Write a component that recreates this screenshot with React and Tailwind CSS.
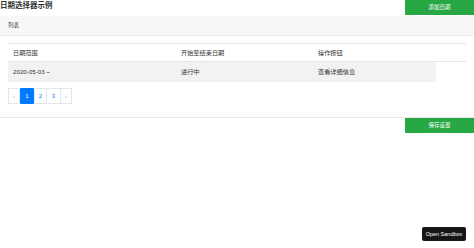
export default function App() {
  const font = { fontFamily: '"Liberation Sans", "Noto Sans CJK SC", sans-serif' };
  return (
    <div className="relative h-[248px] w-[474px] overflow-hidden bg-white text-[#212529]" style={font}>
      <div className="flex items-start justify-between">
        <h1 className="m-0 text-[7.5px] leading-[12px] font-bold text-[#333]">日期选择器示例</h1>
        <button className="h-[15px] w-[69px] bg-[#28a745] text-[5.5px] leading-[15px] text-white">添加日期</button>
      </div>
      <div className="mt-[1px] flex h-[20px] items-center border-b border-[#ececec] bg-[#f7f7f7] px-[8px] text-[5.5px] text-[#333]">
        列表
      </div>
      <div className="px-[8px] pt-[7px]">
        <div className="grid grid-cols-[168px_137px_123px_30px] text-[6.2px] text-[#333]">
          <div className="flex h-[19px] items-center border-t border-b border-[#e6e6e6] pl-[5px]">日期范围</div>
          <div className="flex h-[19px] items-center border-t border-b border-[#e6e6e6] pl-[5px]">开始至结束日期</div>
          <div className="flex h-[19px] items-center border-t border-b border-[#e6e6e6] pl-[5px]">操作按钮</div>
          <div className="h-[19px] border-t border-b border-[#e6e6e6]"></div>
          <div className="flex h-[20px] items-center bg-[#f2f2f2] pl-[5px]">2020-05-03 ~</div>
          <div className="flex h-[20px] items-center bg-[#f2f2f2] pl-[5px]">进行中</div>
          <div className="flex h-[20px] items-center bg-[#f2f2f2] pl-[5px]">查看详细信息</div>
          <div className="h-[20px]"></div>
        </div>
        <div className="mt-[6px] flex h-[16px] text-[6px] text-[#007bff]">
          <span className="flex w-[12px] items-center justify-center border border-[#e3e6ea] text-[#aab]">‹</span>
          <span className="flex w-[14px] items-center justify-center rounded-[1px] bg-[#007bff] text-white">1</span>
          <span className="flex w-[13px] items-center justify-center border border-[#e3e6ea]">2</span>
          <span className="flex w-[13px] items-center justify-center border-y border-[#e3e6ea]">3</span>
          <span className="flex w-[12px] items-center justify-center border border-[#e3e6ea] text-[#aab]">›</span>
        </div>
      </div>
      <div className="mt-[13px] flex justify-end border-t border-[#e9e9e9]">
        <button className="h-[15px] w-[69px] bg-[#28a745] text-[5.5px] leading-[15px] text-white">保存设置</button>
      </div>
      <div className="absolute right-[8px] bottom-[7px] flex h-[14px] w-[44px] items-center justify-center rounded-[2px] bg-[#151515] text-[5.5px] text-white">
        Open Sandbox
      </div>
    </div>
  );
}
